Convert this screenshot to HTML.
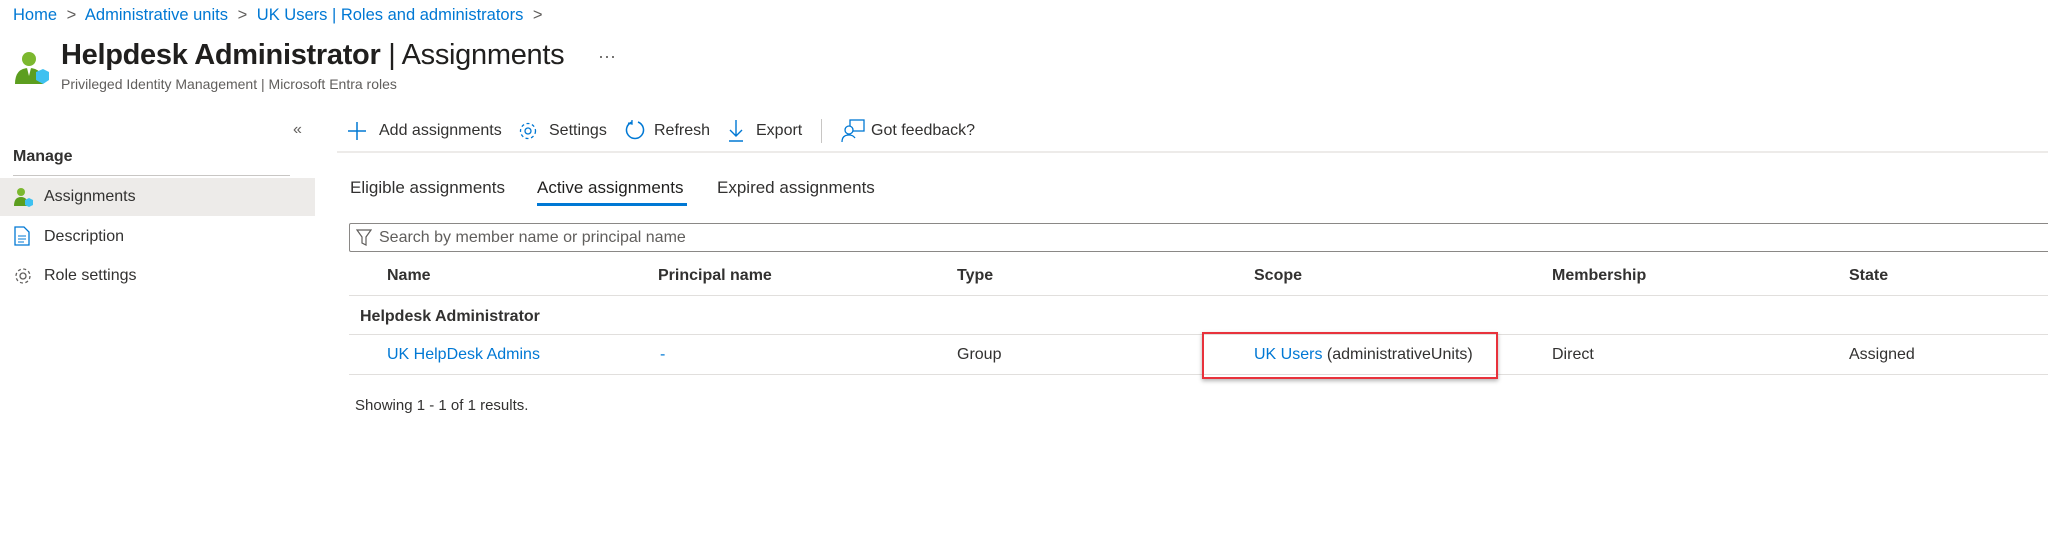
<!DOCTYPE html>
<html><head><meta charset="utf-8"><style>
body{margin:0;width:2048px;height:534px;background:#fff;font-family:"Liberation Sans",sans-serif;color:#323130;position:relative;overflow:hidden}
.a{position:absolute;white-space:nowrap;line-height:1}
.l{color:#0078d4}
.t{font-size:16px}
.hl{position:absolute;height:1px;background:#e1dfdd}
</style></head><body>
<div class="a l" style="left:13px;top:7px;font-size:16.5px">Home <span style="color:#605e5c;margin:0 5px">&gt;</span> Administrative units <span style="color:#605e5c;margin:0 5px">&gt;</span> UK Users | Roles and administrators <span style="color:#605e5c;margin:0 5px">&gt;</span></div>
<svg class="a" style="left:13px;top:50px" width="36" height="36" viewBox="0 0 36 36"><circle cx="16" cy="9" r="7" fill="#7cb82f"/><path d="M2 34 Q2 18 16 18 Q30 18 30 34Z" fill="#5c9e1f"/><path d="M14 18 L16 26 L18 18Z" fill="#fff"/><path d="M23 22 L30 19 L36 22 L36 30 L30 34 L23 30Z" fill="#3ec1f0"/></svg>
<div class="a" style="left:61px;top:41px;font-size:29px;letter-spacing:-0.3px;color:#201f1e"><b>Helpdesk Administrator</b> | Assignments</div>
<div class="a" style="left:598px;top:47px;font-size:18px;color:#605e5c">···</div>
<div class="a" style="left:61px;top:77px;font-size:14px;color:#605e5c">Privileged Identity Management | Microsoft Entra roles</div>
<div class="a" style="left:293px;top:122px;font-size:16px;color:#605e5c">«</div>
<div class="a" style="left:13px;top:149px;font-size:16px;font-weight:bold">Manage</div>
<div class="hl" style="left:13px;top:175px;width:277px;background:#c8c6c4"></div>
<div class="a" style="left:0;top:178px;width:315px;height:38px;background:#edebe9"></div>
<svg class="a" style="left:13px;top:187px" width="20" height="20" viewBox="0 0 20 20"><circle cx="8" cy="5" r="4" fill="#7cb82f"/><path d="M1 19Q1 10 8 10Q15 10 15 19Z" fill="#5c9e1f"/><path d="M12 13L16 11L20 13L20 18L16 20L12 18Z" fill="#3ec1f0"/></svg>
<div class="a t" style="left:44px;top:189px">Assignments</div>
<svg class="a" style="left:14px;top:226px" width="16" height="20" viewBox="0 0 16 20"><path d="M1 1H10L15 6V19H1Z" fill="#fff" stroke="#0078d4" stroke-width="1.3"/><path d="M4 10H12M4 13H12M4 16H10" stroke="#0078d4"/></svg>
<div class="a t" style="left:44px;top:229px">Description</div>
<svg class="a" style="left:13px;top:266px" width="20" height="20" viewBox="0 0 20 20"><circle cx="10" cy="10" r="3" fill="none" stroke="#605e5c" stroke-width="1.3"/><circle cx="10" cy="10" r="7" fill="none" stroke="#605e5c" stroke-width="1.3" stroke-dasharray="3 2.5"/></svg>
<div class="a t" style="left:44px;top:268px">Role settings</div>

<svg class="a" style="left:347px;top:121px" width="20" height="20"><path d="M10 1V19M1 10H19" stroke="#0078d4" stroke-width="1.5"/></svg>
<div class="a t" style="left:379px;top:123px">Add assignments</div>
<svg class="a" style="left:518px;top:121px" width="20" height="20"><circle cx="10" cy="10" r="3" fill="none" stroke="#0078d4" stroke-width="1.3"/><circle cx="10" cy="10" r="7.5" fill="none" stroke="#0078d4" stroke-width="1.3" stroke-dasharray="3 2.6"/></svg>
<div class="a t" style="left:549px;top:123px">Settings</div>
<svg class="a" style="left:624px;top:119px" width="22" height="24"><path d="M8 3A8.5 8.5 0 1 0 14 3" fill="none" stroke="#0078d4" stroke-width="1.5"/><path d="M8 1L8 5L4 4" fill="none" stroke="#0078d4" stroke-width="1.3"/></svg>
<div class="a t" style="left:654px;top:123px">Refresh</div>
<svg class="a" style="left:727px;top:119px" width="18" height="24"><path d="M9 1V17M3 11L9 17L15 11M2 22H16" fill="none" stroke="#0078d4" stroke-width="1.4"/></svg>
<div class="a t" style="left:756px;top:123px">Export</div>
<div class="a" style="left:821px;top:119px;width:1px;height:24px;background:#c8c6c4"></div>
<svg class="a" style="left:841px;top:119px" width="24" height="24"><rect x="9" y="1" width="14" height="11" fill="none" stroke="#0078d4" stroke-width="1.3"/><circle cx="8" cy="11" r="4" fill="#fff" stroke="#0078d4" stroke-width="1.3"/><path d="M1 23Q1 16 8 16Q12 16 14 19" fill="none" stroke="#0078d4" stroke-width="1.3"/></svg>
<div class="a t" style="left:871px;top:123px">Got feedback?</div>
<div class="hl" style="left:337px;top:151px;width:1711px;height:2px;background:#edebe9"></div>

<div class="a" style="left:350px;top:179px;font-size:17px">Eligible assignments</div>
<div class="a" style="left:537px;top:179px;font-size:17px;color:#201f1e">Active assignments</div>
<div class="a" style="left:537px;top:203px;width:150px;height:3px;background:#0078d4"></div>
<div class="a" style="left:717px;top:179px;font-size:17px">Expired assignments</div>

<div class="a" style="left:349px;top:223px;width:1710px;height:27px;border:1px solid #8a8886;border-radius:2px"></div>
<svg class="a" style="left:356px;top:229px" width="16" height="18"><path d="M1 1H15L10 8V16L6 14V8Z" fill="none" stroke="#605e5c" stroke-width="1.2"/></svg>
<div class="a t" style="left:379px;top:230px;color:#605e5c">Search by member name or principal name</div>

<div class="a t" style="left:387px;top:268px;font-weight:bold">Name</div>
<div class="a t" style="left:658px;top:268px;font-weight:bold">Principal name</div>
<div class="a t" style="left:957px;top:268px;font-weight:bold">Type</div>
<div class="a t" style="left:1254px;top:268px;font-weight:bold">Scope</div>
<div class="a t" style="left:1552px;top:268px;font-weight:bold">Membership</div>
<div class="a t" style="left:1849px;top:268px;font-weight:bold">State</div>
<div class="hl" style="left:349px;top:295px;width:1699px"></div>
<div class="a t" style="left:360px;top:309px;font-weight:bold">Helpdesk Administrator</div>
<div class="hl" style="left:349px;top:334px;width:1699px"></div>
<div class="a t l" style="left:387px;top:347px">UK HelpDesk Admins</div>
<div class="a t l" style="left:660px;top:347px">-</div>
<div class="a t" style="left:957px;top:347px">Group</div>
<div class="a t" style="left:1254px;top:347px"><span class="l">UK Users</span> (administrativeUnits)</div>
<div class="a t" style="left:1552px;top:347px">Direct</div>
<div class="a t" style="left:1849px;top:347px">Assigned</div>
<div class="hl" style="left:349px;top:374px;width:1699px"></div>
<div class="a" style="left:1202px;top:332px;width:292px;height:43px;border:2px solid #e8323c;box-shadow:0 2px 4px rgba(0,0,0,.3)"></div>
<div class="a" style="left:355px;top:398px;font-size:15px">Showing 1 - 1 of 1 results.</div>
</body></html>
